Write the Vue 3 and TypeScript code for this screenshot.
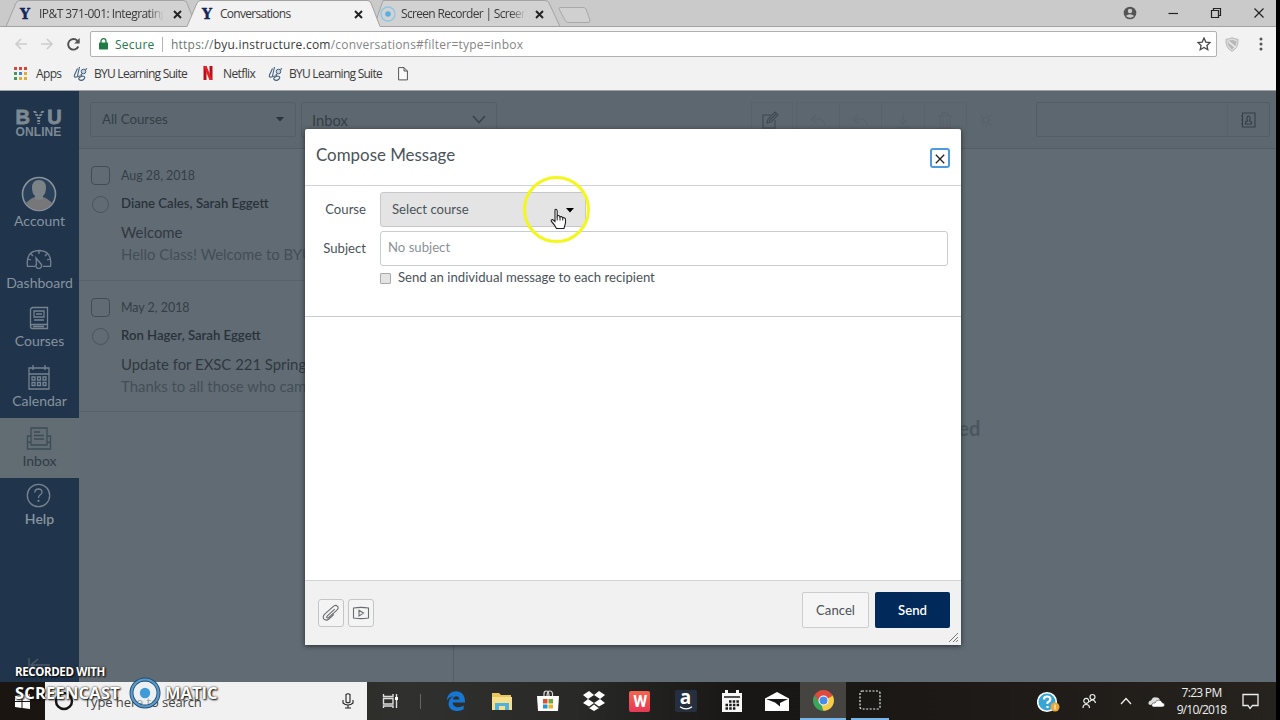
<script setup lang="ts">
interface NavItem { id: string; label: string }
interface Message { date: string; people: string; subject: string; preview: string }

const nav: NavItem[] = [
  { id: 'account', label: 'Account' },
  { id: 'dashboard', label: 'Dashboard' },
  { id: 'courses', label: 'Courses' },
  { id: 'calendar', label: 'Calendar' },
  { id: 'inbox', label: 'Inbox' },
  { id: 'help', label: 'Help' },
]

const messages: Message[] = [
  { date: 'Aug 28, 2018', people: 'Diane Cales, Sarah Eggett', subject: 'Welcome', preview: 'Hello Class! Welcome to BYU' },
  { date: 'May 2, 2018', people: 'Ron Hager, Sarah Eggett', subject: 'Update for EXSC 221 Spring', preview: 'Thanks to all those who came' },
]

const calendarCells: [number, number][] = [[0, 0], [1, 0], [2, 0], [0, 1], [1, 1], [2, 1]]
const appColors: string[] = ['#d8453a', '#d8453a', '#d8453a', '#3e9a57', '#4a7fd0', '#e2a93b', '#3e9a57', '#e2a93b', '#e2a93b']
const tools: string[] = ['compose', 'reply', 'replyall', 'archive', 'delete', 'settings']
</script>

<template>
  <div class="screen">
    <header class="chrome">
      <div class="tabs">
        <svg class="tab-shapes" width="1276" height="28">
          <path d="M0 26.5H6L16 3Q17 .5 20 .5H183Q186 .5 187 3L196 26.5" fill="#d2d2d2" stroke="#a3a3a3" />
          <path d="M374 26.5L383 .5H545Q548 .5 549 3L560 26.5" fill="#d2d2d2" stroke="#a3a3a3" />
          <path d="M0 26.5H187L197 3Q198 .5 201 .5H367Q370 .5 371 3L380 26.5H1276V28H0Z" fill="#f2f2f2" stroke="#a3a3a3" />
          <path d="M0 28V27H1276V28Z" fill="#f2f2f2" />
          <path d="M560 7.500H583Q585 7.500 586 9L590 20Q590 22.500 588 22.500H568Q566 22.500 565 20L559 9Q559 7.500 560 7.500Z" fill="#d0d0d0" stroke="#a9a9a9" />
        </svg>
        <div class="tab tab-first">
          <b class="y-icon">Y</b><span class="tab-title t1">IP&amp;T 371-001: Integrating</span>
          <svg class="x" width="9" height="9"><path d="M1 1L8 8M8 1L1 8" /></svg>
        </div>
        <div class="tab tab-second">
          <b class="y-icon">Y</b><span class="tab-title t2">Conversations</span>
          <svg class="x" width="9" height="9"><path d="M1 1L8 8M8 1L1 8" /></svg>
        </div>
        <div class="tab tab-third">
          <svg width="16" height="16" class="rec"><circle cx="8" cy="8" r="7" fill="none" stroke="#8fc4e3" stroke-width="1.3" /><circle cx="8" cy="8" r="2.800" fill="#57aee0" /></svg>
          <span class="tab-title t3">Screen Recorder | Screenc</span>
          <svg class="x" width="9" height="9"><path d="M1 1L8 8M8 1L1 8" /></svg>
        </div>
        <div class="window-controls">
          <svg width="14" height="14" viewBox="0 0 14 14"><circle cx="7" cy="7" r="6.300" fill="#555" /><circle cx="7" cy="5" r="2.200" fill="#cacaca" /><path d="M2.800 10Q7 6.400 11.200 10Q7 13.500 2.800 10Z" fill="#cacaca" /></svg>
          <svg width="14" height="14" class="line"><path d="M2.500 7.500H12" /></svg>
          <svg width="14" height="14" class="line"><path d="M2.500 4.500H9.500V11.500H2.500ZM4.500 4V2.500H11.500V9.500H10" /></svg>
          <svg width="14" height="14" class="line"><path d="M2.500 2.500L11.500 11.500M11.500 2.500L2.500 11.500" /></svg>
        </div>
      </div>

      <div class="address-row">
        <svg class="arrow" width="14" height="14"><path d="M13 7H2M7 2L2 7L7 12" /></svg>
        <svg class="arrow" width="14" height="14"><path d="M1 7H12M7 2L12 7L7 12" /></svg>
        <svg class="reload" width="15" height="15" viewBox="0 0 15 15"><path d="M12.300 9.500A5.300 5.300 0 1 1 11.300 3.700" fill="none" stroke="#515151" stroke-width="1.900" /><path d="M13.700 1V6.500H8.200Z" fill="#515151" /></svg>
        <div class="address">
          <svg width="9" height="12" viewBox="0 0 9 12"><rect y="4.500" width="9" height="7" rx=".7" fill="#207b45" /><path d="M2 5V3.200A2.500 2.500 0 0 1 7 3.200V5" fill="none" stroke="#207b45" stroke-width="1.300" /></svg>
          <span class="secure">Secure</span>
          <i class="rule"></i>
          <span class="url"><em class="dim">https://</em>byu.instructure.com<em>/conversations#filter=type=inbox</em></span>
          <svg class="star" width="14" height="14" viewBox="0 0 14 14"><path d="M7 1L8.800 5.100L13.100 5.500L9.900 8.400L10.800 12.700L7 10.400L3.200 12.700L4.100 8.400L.9 5.500L5.200 5.100Z" fill="none" stroke="#484848" stroke-width="1.300" /></svg>
        </div>
        <svg class="shield" width="14" height="15" viewBox="0 0 14 15"><path d="M7 .7Q10 2.300 13 2.300Q13.600 11 7 14.300Q.4 11 1 2.300Q4 2.300 7 .7Z" fill="#e0e0e0" stroke="#b5b5b5" /><path d="M7 2.800Q9 3.900 11.500 4Q11.500 9.500 7 12.500Q2.500 9.500 2.500 4Q5 3.900 7 2.800Z" fill="#b9b9b9" /><path d="M3.500 4.500L10.500 10.500" stroke="#efefef" stroke-width="1.500" /></svg>
        <svg class="dots" width="4" height="14"><circle cx="2" cy="2" r="1.500" /><circle cx="2" cy="7" r="1.500" /><circle cx="2" cy="12" r="1.500" /></svg>
      </div>

      <div class="bookmarks">
        <svg class="apps" width="13" height="13"><rect v-for="(c, i) in appColors" :key="i" :x="(i % 3) * 5" :y="Math.floor(i / 3) * 5" width="3" height="3" :fill="c" /></svg>
        <span class="bm bm-apps">Apps</span>
        <svg class="suite" width="15" height="16" viewBox="0 0 15 16"><path d="M4.500 2.500L1.500 9Q.5 11.500 3.500 11L7 10M6.500 1L4.500 10" fill="none" stroke="#425f7c" stroke-width="1.100" /><circle cx="10.500" cy="5.500" r="2.300" fill="#c7d5e2" stroke="#425f7c" /><path d="M12.500 3.500L14 2.500M9 8Q6.500 9.500 9.500 10Q13 10.500 11 13Q8.500 15.500 6 13.500Q5 11.500 9.500 10" fill="none" stroke="#425f7c" stroke-width="1.100" /></svg>
        <span class="bm bm-suite">BYU Learning Suite</span>
        <svg class="netflix" width="10" height="15"><path d="M2 0V14M8 0V14" stroke="#b3121b" stroke-width="3" /><path d="M.5 0H3.500L9.500 14H6.500Z" fill="#e51f2a" /></svg>
        <span class="bm bm-netflix">Netflix</span>
        <svg class="suite" width="15" height="16" viewBox="0 0 15 16"><path d="M4.500 2.500L1.500 9Q.5 11.500 3.500 11L7 10M6.500 1L4.500 10" fill="none" stroke="#425f7c" stroke-width="1.100" /><circle cx="10.500" cy="5.500" r="2.300" fill="#c7d5e2" stroke="#425f7c" /><path d="M12.500 3.500L14 2.500M9 8Q6.500 9.500 9.500 10Q13 10.500 11 13Q8.500 15.500 6 13.500Q5 11.500 9.500 10" fill="none" stroke="#425f7c" stroke-width="1.100" /></svg>
        <span class="bm bm-suite">BYU Learning Suite</span>
        <svg class="page" width="10" height="14"><path d="M.6 .6H6L9.400 4V12.900H.6ZM6 .6V4H9.400" fill="#fafafa" stroke="#555" /></svg>
      </div>
    </header>

    <main class="canvas">
      <nav class="side">
        <div class="logo"><strong>B<span>Y</span>U</strong><b>ONLINE</b></div>
        <div v-for="item in nav" :key="item.id" class="nav-item" :class="item.id">
          <svg v-if="item.id === 'account'" width="36" height="36" viewBox="0 0 36 36"><circle cx="18" cy="18" r="16.500" fill="#2b4159" stroke="#8a9299" stroke-width="1.600" /><path d="M5 27Q10 22 14 21H22Q26 22 31 27Q26 34 18 34Q10 34 5 27Z" fill="#77777a" /><path d="M11 12Q11 4 18 4Q25 4 25 12Q25 17 22 20V23Q18 25 14 23V20Q11 17 11 12Z" fill="#7b8387" /></svg>
          <svg v-else-if="item.id === 'dashboard'" width="26" height="20" viewBox="0 0 26 20"><path d="M9 17.300H1.500Q-.5 2 13 1.500Q26.500 2 24.500 17.300H17M13 2V5M5 5L7 7M2 10L5 11M21 5L19 7M24 10L21 11M10 9L15 15A2.800 2.800 0 1 1 10.500 15Z" /></svg>
          <svg v-else-if="item.id === 'courses'" width="20" height="24" viewBox="0 0 20 24"><path d="M3 1.500H18.500V18.500H3.500Q1.500 18.500 1.500 20.500Q1.500 22.500 3.500 22.500H18.500V18.500M1.500 20V4Q1.500 1.500 4 1.500M4 20.500H15M5 5H15V11H5ZM7 8H13M5 14H15" /></svg>
          <svg v-else-if="item.id === 'calendar'" width="24" height="25" viewBox="0 0 24 25"><path d="M2 3H22V24H2ZM2 9H22M6 0V5M18 0V5M9 3H15" /><rect v-for="([x, y], i) in calendarCells" :key="i" :x="5 + x * 5.500" :y="12 + y * 5.500" width="3" height="3" /></svg>
          <svg v-else-if="item.id === 'inbox'" width="26" height="25" viewBox="0 0 26 25"><path d="M5 17V2H21V17M5 10H1.500V23H24.500V10H21M1.500 16L5 16.500V19H21V16.500L24.500 16M8 6H14M8 9.500H18M8 13H18" /></svg>
          <svg v-else width="25" height="25" viewBox="0 0 25 25"><circle cx="12.500" cy="12.500" r="11.200" /><path d="M8.800 9.500Q9 6 12.500 6Q16 6 16 9Q16 11 14 12Q12.500 13 12.500 15" /><circle cx="12.500" cy="17.800" r=".5" /></svg>
          <span>{{ item.label }}</span>
        </div>
        <svg class="collapse" width="24" height="15"><path d="M2 1V14M23 8H4M11 2L4 8L11 14" /></svg>
      </nav>

      <section class="content">
        <div class="toolbar">
          <div class="select all">All Courses<svg width="8" height="5"><path d="M0 0H8L4 4.500Z" fill="#2a343c" /></svg></div>
          <div class="select box">Inbox<svg width="14" height="9"><path d="M1 1L7 7.500L13 1" fill="none" stroke="#3a444c" stroke-width="1.700" /></svg></div>
          <div class="tools">
            <span v-for="tool in tools" :key="tool" class="tool" :class="tool">
              <svg width="18" height="18" viewBox="0 0 18 18">
                <path v-if="tool === 'compose'" d="M10 4H2V17H14V9M6 12L7 8L14 1L17 4L10 11ZM8 10L15 3" />
                <path v-else-if="tool === 'reply' || tool === 'replyall'" d="M7 4L2 8L7 12M2 8H11Q16 9 16 15" />
                <path v-else-if="tool === 'archive'" d="M9 2V13M5 9L9 13L13 9M2 16H16" />
                <path v-else-if="tool === 'delete'" d="M2 5H16M6 5V2H12V5M4 5V17H14V5M7 8V15M11 8V15" />
                <path v-else d="M9 2V4M9 14V16M2 9H4M14 9H16M4 4L6 6M14 4L12 6M4 14L6 12M14 14L12 12M6 9A3 3 0 1 0 12 9A3 3 0 1 0 6 9" />
              </svg>
            </span>
          </div>
          <div class="search"><span></span><i><svg width="15" height="16" viewBox="0 0 15 16"><path d="M1.500 1H14V15H1.500ZM0 4H2M0 8H2M0 12H2M4.500 12V10L6.500 9Q5 4 7.500 4Q10 4 8.500 9L10.500 10V12Z" fill="none" stroke="#343e46" stroke-width="1.100" /></svg></i></div>
        </div>
        <div class="panes">
          <div class="list">
            <article v-for="m in messages" :key="m.date">
              <i class="check"></i><time>{{ m.date }}</time>
              <i class="round"></i><b>{{ m.people }}</b>
              <span class="subj">{{ m.subject }}</span>
              <span class="prev">{{ m.preview }}</span>
            </article>
          </div>
          <div class="empty">No Conversations Selected</div>
        </div>
      </section>

      <section class="modal">
        <div class="modal-head">
          <h1>Compose Message</h1>
          <button class="close"><svg width="10" height="10"><path d="M.8 .8L9.200 9.200M9.200 .8L.8 9.200" stroke="#222" stroke-width="1.300" /></svg></button>
        </div>
        <div class="form">
          <div class="row"><label>Course</label><div class="course">Select course<svg width="8" height="5"><path d="M0 0H8L4 4.500Z" /></svg></div></div>
          <div class="row subject"><label>Subject</label><div class="field">No subject</div></div>
          <div class="each"><i></i><span>Send an individual message to each recipient</span></div>
        </div>
        <div class="editor"></div>
        <footer>
          <button class="small"><svg width="18" height="18" viewBox="0 0 18 18"><path d="M12.500 5L5.500 12Q4.300 13.200 5.200 14Q6 14.500 7 13.500L14.500 6Q17 3.500 15 1.900Q13 .2 10.500 2.700L3 10.200Q.2 13 2.300 15.500Q4.700 17.500 7.500 14.800L12 10.300" transform="rotate(3 9 9)" /></svg></button>
          <button class="small"><svg width="18" height="14" viewBox="0 0 18 14"><path d="M1.500 2Q9 .8 16.500 2V12Q9 13.200 1.500 12ZM7 4.200V10L11.500 7.100Z" /></svg></button>
          <button class="cancel">Cancel</button>
          <button class="send">Send</button>
          <svg class="grip" width="11" height="11"><path d="M1 10L10 1M5 10L10 5M8 10L10 8" stroke="#777" /></svg>
        </footer>
        <div class="halo">
          <svg width="18" height="22" viewBox="0 0 18 22"><path d="M5.200 1.500Q7 1 7.200 3V8.500L8 7.500Q9.500 7.200 10 9Q11.500 7.800 12.700 9.800Q14.500 9 15.500 11V15L14 20.500H6.500Q4.500 16.500 1.500 13.500Q.5 11.500 2.700 11.500L5 13.500V3Q5 1.700 5.200 1.500Z" fill="#fff" stroke="#222" stroke-width="1.100" /><path d="M7.200 8.500V12.500M10 9V12.500M12.700 9.800V12.500" stroke="#222" /></svg>
        </div>
      </section>
    </main>

    <div class="taskbar">
      <div class="start"><svg width="15" height="15"><path d="M0 2L6.500 1V7H0ZM7.500 1L15 0V7H7.500ZM0 8H6.500V14L0 13ZM7.500 8H15V15L7.500 14Z" fill="#fff" /></svg></div>
      <div class="find">
        <svg width="20" height="20"><circle cx="10" cy="10" r="8" fill="none" stroke="#151515" stroke-width="2.500" /></svg>
        <span>Type here to search</span>
        <svg class="mic" width="12" height="16"><path d="M4 1.500Q6 0 8 1.500V9Q6 10.500 4 9ZM1 7V10Q3 12 6 12Q9 12 11 10V7M6 12V15M3 15H9" fill="none" stroke="#222" stroke-width="1.100" /></svg>
      </div>
      <div class="cell"><svg width="18" height="16"><path d="M2.500 1V3.500H12V1M2.500 5.500H12V11H2.500ZM2.500 15V13H12V15M15.500 1V15" fill="none" stroke="#ddd" stroke-width="1.400" /><path d="M14 4H17V7H14Z" fill="#fff" /></svg></div>
      <i class="sep"></i>
      <div class="cell"><svg width="20" height="20" viewBox="0 0 20 20"><path d="M.8 9.500C1.500 3 5.500 .3 10 .3C16 .3 19.300 4.500 19 11.500H6.700C7 17 13.500 17.300 17.700 14.500V18.300C9 22.500 2 18.500 2.600 12C2.900 8.500 5 6.500 7.500 5.500C4.500 5.600 2.500 7 .8 9.500ZM6.900 8.500H13.300C13.300 3.900 7.500 4.300 6.900 8.500Z" fill="#1676d2" fill-rule="evenodd" /></svg></div>
      <div class="cell"><svg width="20" height="19"><path d="M0 1H7L9 3H19V18H0Z" fill="#e9c75d" /><path d="M0 5H20V18H0Z" fill="#f8df8b" /><path d="M3 18V11H17V18H13V14H7V18Z" fill="#4fb2df" /></svg></div>
      <div class="cell"><svg width="22" height="22"><path d="M7 6V4Q7 1 9.500 1Q12 1 12 6M10 6Q10 1 13 1Q16 1 15.500 6" fill="none" stroke="#ddd" stroke-width="1.200" /><path d="M0 6H22L21 21H1Z" fill="#fff" /><path d="M6 9H10.500V13.500H6Z" fill="#d85331" /><path d="M11.500 9H16V13.500H11.500Z" fill="#78a633" /><path d="M6 14.500H10.500V18.500H6Z" fill="#2696ce" /><path d="M11.500 14.500H16V18.500H11.500Z" fill="#e9b329" /></svg></div>
      <div class="cell"><svg width="22" height="20"><path d="M0 4L6 0L11 4L5 8ZM22 4L16 0L11 4L17 8ZM0 12L5 8L11 12L6 15.500ZM22 12L17 8L11 12L16 15.500ZM5 16.500L6.500 17L11 13.500L15.500 17L17 16.500L11 20Z" fill="#fff" /></svg></div>
      <div class="cell"><div class="wps">W</div></div>
      <div class="cell"><div class="amazon">a<svg width="14" height="4"><path d="M1 .7Q7 5 13 .8" fill="none" stroke="#fff" stroke-width="1.200" /></svg></div></div>
      <div class="cell"><svg width="20" height="22"><path d="M0 3H3V0H6V3H14V0H17V3H20V22H0Z" fill="#f7f7f7" /><path d="M2 7H18" stroke="#1a1a1a" stroke-width="1.500" /><path d="M7 11.500H18M3.500 15H18M3.500 18.500H14" stroke="#1a1a1a" stroke-width="2.500" stroke-dasharray="2.500 1.200" /></svg></div>
      <div class="cell"><svg width="24" height="19"><path d="M0 6.500L12 0L24 6.500V19H0Z" fill="#fff" /><path d="M1 7H23L15 11V14.500L10 10.500Z" fill="#171615" /></svg></div>
      <div class="cell active"><svg width="21" height="21" viewBox="0 0 20 20"><path d="M10 10L1.340 5A10 10 0 0 1 18.660 5Z" fill="#dd4b3e" /><path d="M10 10L18.660 5A10 10 0 0 1 10 20Z" fill="#f7cc47" /><path d="M10 10V20A10 10 0 0 1 1.340 5Z" fill="#3ba55a" /><path d="M10 5.500H18.900L10 10ZM6 12L1.340 5L10 10Z" fill="#dd4b3e" opacity=".9" /><path d="M14 12L10 20L8 14Z" fill="#f7cc47" /><circle cx="10" cy="10" r="4.800" fill="#fff" /><circle cx="10" cy="10" r="3.800" fill="#4b8bea" /></svg></div>
      <div class="cell open"><svg width="22" height="20"><rect x="1" y="1" width="20" height="18" rx="2" fill="none" stroke="#eee" stroke-width="1.200" stroke-dasharray="2 1.500" /></svg></div>
      <div class="tray">
        <svg class="t-help" width="23" height="22"><circle cx="10" cy="11" r="9.300" fill="#3aa5d2" stroke="#fff" stroke-width="1.600" /><path d="M7 8.500Q7 5.500 10 5.500Q13.500 5.500 13.300 8.500Q13 10.500 10.500 11.500V13M10.500 15V17" fill="none" stroke="#fff" stroke-width="2.200" /><circle cx="18" cy="16" r="4.500" fill="#e9a83c" /><path d="M18 13.500V18.500" stroke="#fff" /></svg>
        <svg class="t-people" width="15" height="16"><path d="M2 9A2.500 2.500 0 1 1 6.500 9A2.500 2.500 0 0 1 2 9M1 15Q1 11.500 4 11.500Q7.500 11.500 7.500 15M8 4A2.500 2.500 0 1 1 13 4A2.500 2.500 0 1 1 8 4M7.500 9Q8.500 7 10.500 7Q13 7 13.500 10" fill="none" stroke="#eee" stroke-width="1.200" /></svg>
        <svg class="t-up" width="12" height="8"><path d="M1 7L6 1.500L11 7" fill="none" stroke="#eee" stroke-width="1.300" /></svg>
        <svg class="t-cloud" width="17" height="11"><path d="M3 9Q0 9 .5 6.500Q1 4.500 3 4.500Q5 0 8.500 1.500Q11 1 12 4Z" fill="#ddd" /><path d="M5 11Q3 10 4 8Q5 6.500 7 7Q8 4 11 4Q13.500 4 14 6.500Q17 7 16.500 9.500Q16 11 14 11Z" fill="#fff" stroke="#1b1a19" stroke-width=".5" /></svg>
        <div class="clock"><span class="time">7:23 PM</span><span class="date">9/10/2018</span></div>
        <svg class="t-note" width="17" height="17"><path d="M1 1.500H16V12.500H10.500L8 15.500L6 12.500H1Z" fill="none" stroke="#eee" stroke-width="1.300" /></svg>
      </div>
    </div>

    <div class="watermark">
      <span class="recorded">RECORDED WITH</span>
      <div class="brand"><b class="sc">SCREENCAST</b><svg width="32" height="34"><circle cx="16" cy="17" r="13.500" fill="#e8eef3" fill-opacity=".55" stroke="#1f4e78" stroke-width="4" /><circle cx="16" cy="17" r="13.500" fill="none" stroke="#5d9bc9" stroke-width="2.200" /><circle cx="16" cy="17" r="5.200" fill="#419bd8" /></svg><b class="mt">MATIC</b></div>
    </div>
  </div>
</template>

<style>
body { background: #000; overflow: hidden; }
</style>

<style scoped>
* { box-sizing: border-box; }
svg { display: block; flex: none; }
button { font: inherit; padding: 0; margin: 0; }
em { font-style: normal; }
.screen { position: relative; width: 1280px; height: 720px; padding-right: 4px; display: flex; flex-direction: column; background: #000; overflow: hidden; font-family: "Open Sans", "Noto Sans", sans-serif; white-space: nowrap; }

.chrome { height: 91px; flex: none; background: #f2f2f2; border-bottom: 1px solid #9ea2a5; color: #3a3a3a; font-size: 12px; }
.tabs { position: relative; height: 28px; background: #cacaca; display: flex; align-items: center; }
.tab-shapes { position: absolute; left: 0; top: 0; }
.tab { position: relative; display: flex; align-items: center; height: 27px; }
.tab-first { width: 181px; padding-left: 20px; }
.tab-second { width: 182px; padding-left: 21px; }
.tab-third { width: 199px; padding-left: 17px; }
.y-icon { font-family: "DejaVu Serif", serif; font-size: 14px; color: #14265b; width: 18px; flex: none; -webkit-text-stroke: .4px #14265b; }
.tab-title { overflow: hidden; flex: none; margin-top: -1px; }
.t1 { width: 127px; padding-left: 1px; letter-spacing: -.55px; -webkit-mask-image: linear-gradient(90deg, #000 87%, transparent 99%); mask-image: linear-gradient(90deg, #000 87%, transparent 99%); }
.t2 { width: 126px; letter-spacing: -.72px; }
.t3 { width: 126px; letter-spacing: -.68px; -webkit-mask-image: linear-gradient(90deg, #000 87%, transparent 99%); mask-image: linear-gradient(90deg, #000 87%, transparent 99%); }
.rec { margin-right: 5px; }
.x { margin-left: 8px; }
.tab-first .x { margin-left: 8px; }
.x path { stroke: #222; stroke-width: 1.900; }
.window-controls { display: flex; gap: 29px; margin-left: auto; padding-right: 10px; margin-top: -3px; position: relative; }
.line path { fill: none; stroke: #222; stroke-width: 1.200; }
.address-row { height: 32px; display: flex; align-items: center; padding-left: 14px; }
.arrow { margin-right: 12px; fill: none; stroke: #cdcdcd; stroke-width: 1.700; }
.reload { margin-right: 10px; }
.address { width: 1127px; height: 26px; margin-left: -1px; background: #fff; border: 1px solid #b1b1b1; border-radius: 2px; display: flex; align-items: center; padding: 0 5px 0 8px; }
.secure { color: #26794a; margin-left: 7px; width: 47px; letter-spacing: .25px; }
.rule { width: 1px; height: 15px; background: #b5b5b5; }
.url { margin-left: 8px; letter-spacing: .22px; }
.url em { color: #858585; }
.url .dim { color: #6c776f; }
.star { margin-left: auto; }
.shield { margin-left: 8px; }
.dots { margin-left: 20px; fill: #555; }
.bookmarks { height: 27px; display: flex; align-items: center; padding-left: 14px; }
.bm-apps { margin-left: 9px; width: 37px; letter-spacing: -.65px; }
.suite { width: 15px; }
.bm-suite { margin-left: 6px; width: 108px; letter-spacing: -.74px; }
.netflix { margin-left: 1px; }
.bm-netflix { margin-left: 10px; width: 45px; letter-spacing: -.6px; }
.page { margin-left: 1px; }

.canvas { position: relative; flex: 1; display: flex; min-height: 0; background: #616b74; font-family: Lato, sans-serif; }
.side { position: relative; width: 79px; flex: none; background: #20354c; color: #87939e; }
.logo { height: 75px; padding-top: 18px; display: flex; flex-direction: column; align-items: center; line-height: 1; color: #7d8993; padding-right: 2px; }
.logo strong { font-family: "Liberation Sans", sans-serif; font-size: 20px; line-height: 17px; letter-spacing: 1.900px; padding-left: 2px; -webkit-text-stroke: .8px #7d8993; }
.logo strong span { color: transparent; -webkit-text-stroke: 0; background: repeating-linear-gradient(0deg, #7d8993 0 2px, #20354c 2px 3px); -webkit-background-clip: text; background-clip: text; }
.logo b { font-family: "Liberation Sans", sans-serif; font-size: 12px; line-height: 13px; letter-spacing: .1px; }
.nav-item { height: 60px; position: relative; display: flex; flex-direction: column; align-items: center; font-size: 14px; }
.nav-item svg { fill: none; stroke: #76838f; stroke-width: 1.300; margin-top: 8px; margin-right: 1px; }
.nav-item svg * { vector-effect: non-scaling-stroke; }
.nav-item span { position: absolute; top: 34px; line-height: 18px; }
.account { height: 72px; }
.account svg { margin-top: 10px; stroke: none; }
.account span { top: 46px; }
.dashboard svg { margin-top: 11px; }
.dashboard span { top: 36px; }
.calendar svg { margin-top: 7px; }
.inbox { background: #626c73; color: #303b45; }
.inbox svg { stroke: #3b4c57; }
.help span { top: 32px; font-weight: 600; }
.help svg { margin-top: 5px; margin-right: 2px; }
.collapse { position: absolute; left: 27px; bottom: 10px; fill: none; stroke: #4c5b69; stroke-width: 1.300; }

.content { flex: 1; display: flex; flex-direction: column; color: #30383f; min-width: 0; }
.toolbar { height: 58px; border-bottom: 1px solid #535d66; display: flex; padding: 11px 6px 0 11px; background: #5d6770; }
.select { height: 35px; border: 1px solid #535e67; border-radius: 2px; display: flex; align-items: center; justify-content: space-between; font-size: 13.300px; color: #343e46; padding-bottom: 1px; }
.all { width: 206px; padding: 0 11px 1px 11px; }
.box { width: 196px; margin-left: 5px; padding: 0 10px; font-size: 14.700px; }
.tools { display: flex; margin-left: 254px; opacity: .75; }
.tool { width: 42.500px; height: 35px; border-left: 1px solid #56616a; border-top: 1px solid #57626b; display: flex; align-items: center; justify-content: center; }
.tool svg { fill: none; stroke: #56606a; stroke-width: 1.100; }
.tool.compose { border-right: 1px solid #56616a; width: 42px; margin-right: 3px; }
.tool.compose svg { stroke: #353f47; margin-right: 4px; }
.tool.settings { border-top: 0; }
.tool.settings svg { margin-right: 4px; }
.search { display: flex; margin-left: auto; width: 234px; height: 35px; border: 1px solid #525d66; border-radius: 2px; }
.search span { width: 191px; border-right: 1px solid #56616a; }
.search i { flex: 1; display: flex; align-items: center; justify-content: center; }
.panes { flex: 1; display: flex; min-height: 0; }
.list { width: 375px; border-right: 1px solid #525d66; overflow: hidden; }
article { height: 131.500px; border-bottom: 1px solid #57616a; padding: 17px 0 0 12px; display: grid; grid-template-columns: 30px 320px; grid-template-rows: 20px 36px 20px 24px; }
.check { width: 19px; height: 19px; border: 1px solid #414c55; border-radius: 4px; }
.round { width: 17px; height: 17px; border: 1px solid #48535c; border-radius: 50%; margin: 10px 0 0 1px; }
time { font-size: 12.400px; line-height: 19px; color: #343e46; }
article b { font-size: 13.150px; line-height: 35px; color: #29323a; font-weight: 600; }
.subj, .prev { grid-column: 2; font-size: 14.900px; line-height: 20px; }
.prev { color: #444e56; line-height: 25px; }
.empty { flex: 1; display: flex; align-items: center; justify-content: center; font-size: 20px; color: #4b555e; padding-right: 9px; font-weight: 700; padding-top: 25px; }

.modal { position: absolute; left: 305px; top: 38px; width: 656px; height: 516px; background: #fff; border-radius: 2px 2px 0 0; box-shadow: 0 1px 5px #252c32; display: flex; flex-direction: column; color: #4b5359; font-size: 13.150px; }
.modal-head { height: 57px; flex: none; border-bottom: 1px solid #d0d2d3; display: flex; justify-content: space-between; align-items: flex-start; padding: 17px 11px 0 11px; }
h1 { margin: 0; font-size: 16.900px; line-height: 18px; font-weight: 400; }
.close { width: 20px; height: 20px; margin-top: 2px; border: 2px solid #4d9ade; border-radius: 3px; background: #fff; display: flex; align-items: center; justify-content: center; padding-top: 2px; }
.form { height: 131px; flex: none; padding: 6px 13px 0 0; border-bottom: 1px solid #c9cdcf; }
.row { display: flex; align-items: center; height: 35px; }
.subject { margin-top: 4px; }
.course { width: 206px; height: 35px; border: 1px solid #c6c8c9; border-radius: 3px; background: #e4e4e4; display: flex; justify-content: space-between; align-items: center; padding: 0 11px 1px 11px; }
.course svg { margin-top: 2px; }
.field { width: 568px; height: 35px; border: 1px solid #c7ccd0; border-radius: 3px; padding-left: 7px; line-height: 31px; color: #8c9297; }
.each { display: flex; align-items: center; height: 22px; padding-left: 75px; }
.each i { width: 11px; height: 11px; border: 1px solid #aaa; border-radius: 1px; background: #e4e4e4; margin-top: 3px; margin-right: 7px; }
.row label { width: 75px; padding: 0 14px 2px 0; text-align: right; flex: none; }
.editor { flex: 1; }
footer { position: relative; height: 65px; flex: none; background: #f1f1f1; border-top: 1px solid #d1d4d6; display: flex; padding: 11px 11px 0 13px; }
.small { width: 26px; height: 28px; margin: 7px 4px 0 0; border: 1px solid #c3c5c7; border-radius: 3px; background: #f4f4f4; display: flex; align-items: center; justify-content: center; }
.small svg { fill: none; stroke: #696d71; stroke-width: 1.100; }
.cancel { width: 67px; height: 36px; margin-left: auto; border: 1px solid #cbcdcf; border-radius: 2px; background: #f5f5f5; color: #4b5359; line-height: 32px; }
.send { width: 75px; height: 36px; margin-left: 6px; border: 0; border-radius: 2px; background: #01295a; color: #fff; font-weight: 600; line-height: 34px; }
.grip { position: absolute; right: 2px; bottom: 2px; }
.halo { position: absolute; left: 218px; top: 47px; width: 67px; height: 67px; border: 3px solid #f4f71b; border-radius: 50%; padding: 29px 0 0 24px; }

.taskbar { height: 38px; flex: none; display: flex; align-items: stretch; background: linear-gradient(90deg, #1b1511 0 3%, #30312e 32%, #292927 45%, #181715 58%, #1b1815 72%, #26231f 100%); color: #eee; }
.start { width: 45px; display: flex; align-items: center; padding-left: 15px; }
.find { width: 322px; background: #f1f1f1; display: flex; align-items: center; padding: 0 13px 0 9px; font-size: 13px; color: #444; }
.find span { margin-left: 10px; letter-spacing: -.1px; padding-top: 2px; }
.mic { margin-left: auto; }
.cell { width: 45.950px; flex: none; display: flex; align-items: center; justify-content: center; }
.sep { width: 1px; height: 15px; background: #666; margin: 12px 12px 0 7px; }
.active { background: #464440; border-bottom: 2px solid #78b5e9; padding-top: 1px; }
.open { border-bottom: 2px solid #78b5e9; margin-left: 5px; width: 38px; }
.wps { width: 21px; height: 21px; border-radius: 2px; background: linear-gradient(#f3654e, #e73855); font: 700 16px/21px Roboto, sans-serif; text-align: center; color: #fff; letter-spacing: -1px; }
.amazon { position: relative; width: 22px; height: 22px; background: #252f3e; border-radius: 2px; font: 700 19px/15px "Open Sans", sans-serif; text-align: center; color: #fff; }
.amazon svg { position: absolute; left: 4px; bottom: 2px; }
.tray { flex: 1; display: flex; align-items: center; justify-content: flex-end; padding-right: 17px; }
.t-help { margin-right: 22px; margin-top: 2px; }
.t-people { margin-right: 23px; }
.t-up { margin-right: 16px; }
.t-cloud { margin-right: 11px; }
.clock { display: flex; flex-direction: column; align-items: center; font-size: 12px; line-height: 17px; width: 51px; margin-right: 15px; }
.time { letter-spacing: -.7px; }
.date { letter-spacing: -.8px; }

.watermark { position: absolute; left: 15px; top: 664px; color: #fff; text-shadow: 1px 1px 2px #000, 0 0 2px #222; }
.recorded { display: block; font-weight: 700; font-size: 11.500px; line-height: 15px; letter-spacing: -.38px; }
.brand { display: flex; align-items: center; height: 34px; margin-top: -3px; font-size: 16.500px; line-height: 30px; }
.sc { width: 114px; letter-spacing: .2px; }
.mt { margin-left: 4px; }
</style>
